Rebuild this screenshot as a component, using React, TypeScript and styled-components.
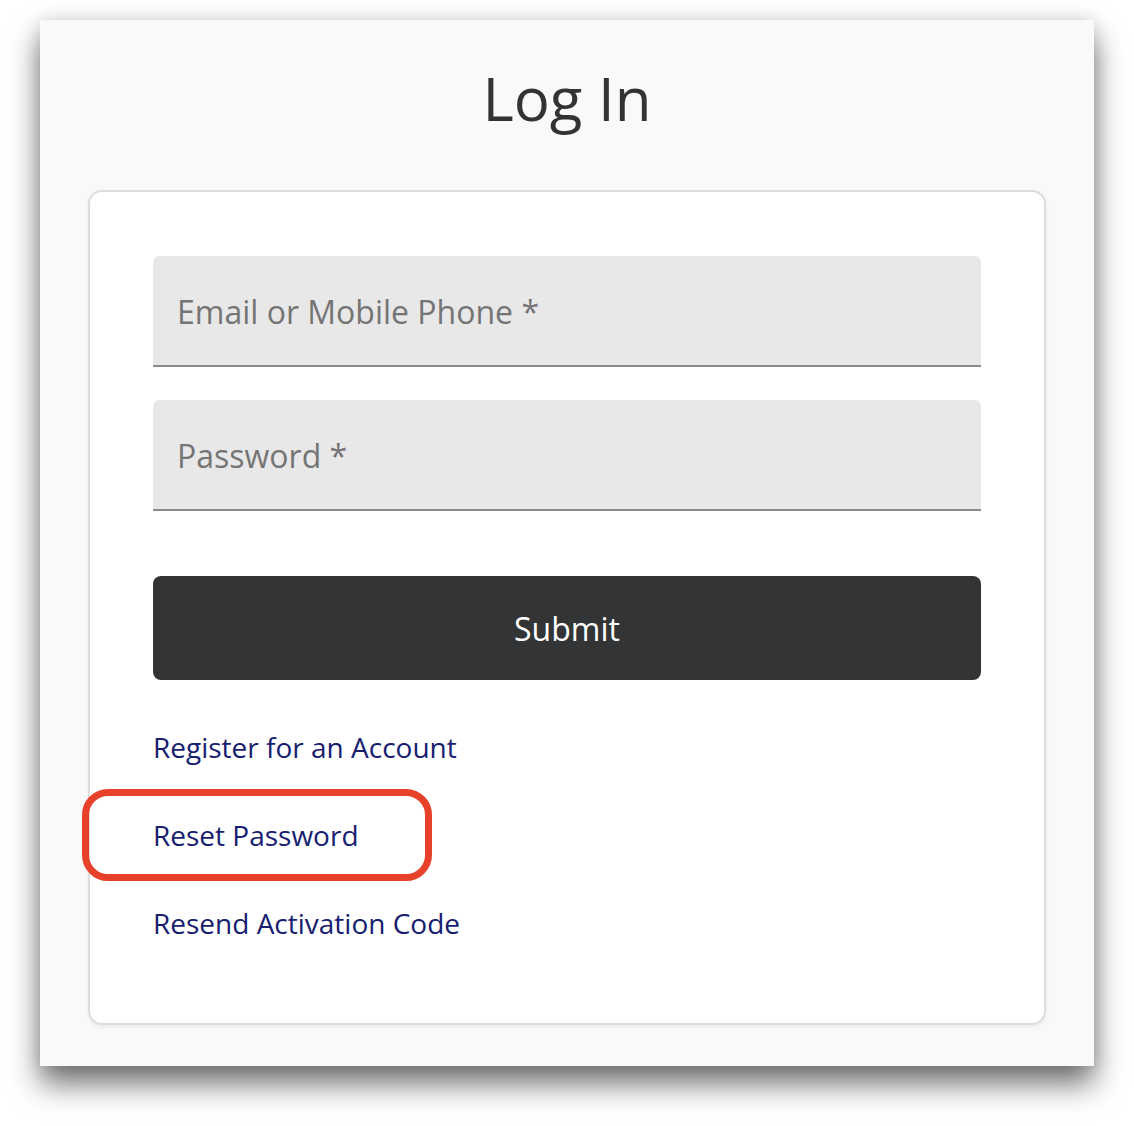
import React from "react";
import styled, { createGlobalStyle } from "styled-components";

const GlobalStyle = createGlobalStyle`
  html, body {
    margin: 0;
    padding: 0;
    background: #ffffff;
    font-family: "Open Sans", "Noto Sans", sans-serif;
  }
`;

const Page = styled.div`
  padding: 20px 40px 60px 40px;
  width: 1054px;
`;

const Panel = styled.main`
  background: #f9f9f9;
  box-shadow: 0 18px 28px rgba(0, 0, 0, 0.55), 0 0 18px rgba(0, 0, 0, 0.12);
  padding: 37px 48px 41px 48px;
  display: flex;
  flex-direction: column;
  align-items: center;
`;

const Title = styled.h1`
  margin: 0 0 51px 0;
  font-size: 60px;
  font-weight: 400;
  color: #333333;
  line-height: 82px;
`;

const Card = styled.section`
  box-sizing: border-box;
  width: 958px;
  background: #ffffff;
  border: 2px solid #dddddd;
  border-radius: 14px;
  box-shadow: 0 2px 5px rgba(0, 0, 0, 0.06);
  padding: 64px 63px 79px 63px;
  display: flex;
  flex-direction: column;
`;

const Field = styled.input`
  box-sizing: border-box;
  width: 100%;
  height: 111px;
  margin-bottom: ${(p: { $gap: number }) => p.$gap}px;
  padding: 2px 25px 0 24px;
  border: none;
  border-bottom: 2px solid #8a8a8a;
  border-radius: 6px 6px 0 0;
  background: #e8e8e8;
  font-family: "Open Sans", "Noto Sans", sans-serif;
  font-size: 32px;
  color: #333;
  outline: none;

  &::placeholder {
    color: #757575;
    opacity: 1;
  }
`;

const SubmitButton = styled.button`
  width: 100%;
  height: 104px;
  border: none;
  border-radius: 8px;
  background: #333436;
  color: #ffffff;
  font-family: "Open Sans", "Noto Sans", sans-serif;
  font-size: 32px;
  cursor: pointer;
  margin-bottom: 47px;
`;

const Links = styled.nav`
  display: flex;
  flex-direction: column;
  gap: 47px;
`;

const LinkRow = styled.div`
  position: relative;
  display: flex;
`;

const TextLink = styled.a`
  font-size: 28px;
  line-height: 41px;
  color: #17206f;
  text-decoration: none;
`;

const Highlight = styled.span`
  position: absolute;
  left: -71px;
  top: -26px;
  width: 350px;
  height: 92px;
  box-sizing: border-box;
  border: 7px solid #e8412a;
  border-radius: 26px;
  pointer-events: none;
`;

export default function App() {
  return (
    <>
      <GlobalStyle />
      <Page>
        <Panel>
          <Title>Log In</Title>
          <Card>
            <Field $gap={33} type="text" placeholder="Email or Mobile Phone *" />
            <Field $gap={65} type="password" placeholder="Password *" />
            <SubmitButton type="submit">Submit</SubmitButton>
            <Links>
              <LinkRow>
                <TextLink href="#">Register for an Account</TextLink>
              </LinkRow>
              <LinkRow>
                <TextLink href="#">Reset Password</TextLink>
                <Highlight />
              </LinkRow>
              <LinkRow>
                <TextLink href="#">Resend Activation Code</TextLink>
              </LinkRow>
            </Links>
          </Card>
        </Panel>
      </Page>
    </>
  );
}
